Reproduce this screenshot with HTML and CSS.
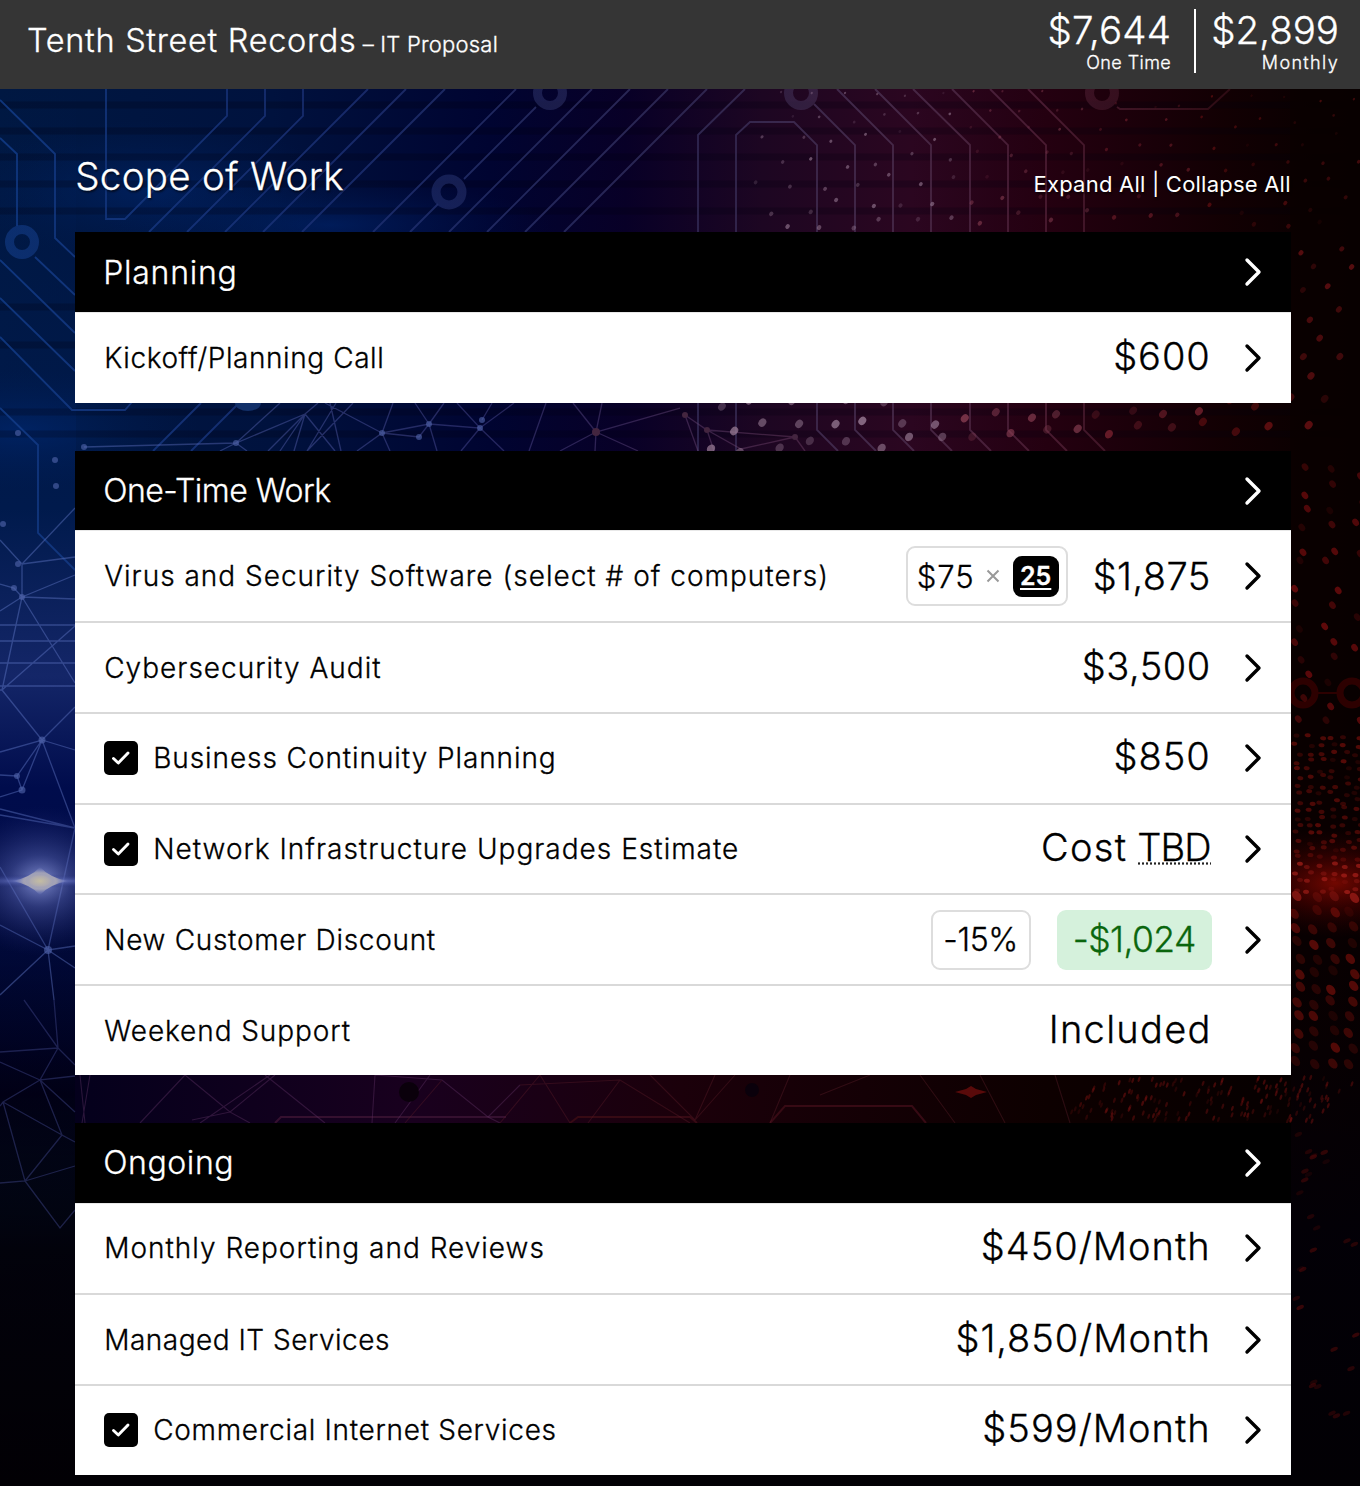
FILE: index.html
```html
<!DOCTYPE html>
<html lang="en">
<head>
<meta charset="utf-8">
<title>Tenth Street Records – IT Proposal</title>
<link rel="stylesheet" href="styles.css">
</head>
<body>
<svg class="icon-defs" aria-hidden="true">
  <symbol id="chevron" viewBox="0 0 18 30"><path d="M3 3 15 15 3 27" fill="none" stroke="currentColor" stroke-width="3.4" stroke-linecap="round" stroke-linejoin="round"/></symbol>
  <symbol id="check" viewBox="0 0 34 34"><path d="M9.5 17.5 14.3 22 24 12" fill="none" stroke="currentColor" stroke-width="2.9" stroke-linecap="round" stroke-linejoin="round"/></symbol>
</svg>

<svg class="backdrop" viewBox="0 0 1360 1486" aria-hidden="true">
  <defs>
    <linearGradient id="base" x1="0" x2="1" y1="0" y2="0">
      <stop offset="0" stop-color="#001842"/><stop offset=".2" stop-color="#00123e"/><stop offset=".36" stop-color="#000431"/><stop offset=".46" stop-color="#080027"/>
      <stop offset=".56" stop-color="#1d0622"/><stop offset=".67" stop-color="#2b0620"/><stop offset=".77" stop-color="#240010"/><stop offset=".9" stop-color="#120003"/><stop offset="1" stop-color="#060000"/>
    </linearGradient>
    <linearGradient id="edge" x1="0" x2="0" y1="0" y2="1">
      <stop offset="0" stop-color="#00194a" stop-opacity="0"/><stop offset=".3" stop-color="#001a4c"/><stop offset=".42" stop-color="#142668"/><stop offset=".5" stop-color="#000c4c"/><stop offset=".62" stop-color="#000a40"/><stop offset=".72" stop-color="#000020"/><stop offset=".82" stop-color="#02000e" stop-opacity="0"/>
    </linearGradient>
    <linearGradient id="dusk" x1="0" x2="0" y1="0" y2="1">
      <stop offset=".55" stop-color="#020007" stop-opacity="0"/><stop offset=".7" stop-color="#020007" stop-opacity=".25"/><stop offset=".84" stop-color="#020007" stop-opacity=".93"/><stop offset="1" stop-color="#020004"/>
    </linearGradient>
    <linearGradient id="lower" x1="0" x2="1" y1="0" y2="0">
      <stop offset="0" stop-color="#04001c"/><stop offset=".28" stop-color="#19001e"/><stop offset=".5" stop-color="#1b000a"/><stop offset=".8" stop-color="#0d0000"/><stop offset="1" stop-color="#060000"/>
    </linearGradient>
    <linearGradient id="ink" gradientUnits="userSpaceOnUse" x1="0" x2="1360" y1="0" y2="0">
      <stop offset="0" stop-color="#123c88"/><stop offset=".25" stop-color="#1b2f72"/><stop offset=".5" stop-color="#322c58"/><stop offset=".65" stop-color="#4a2f50"/><stop offset=".77" stop-color="#501f36"/><stop offset=".92" stop-color="#300b12"/><stop offset="1" stop-color="#1c0204"/>
    </linearGradient>
    <linearGradient id="mesh" gradientUnits="userSpaceOnUse" x1="0" x2="1360" y1="0" y2="0">
      <stop offset="0" stop-color="#6079c8"/><stop offset=".35" stop-color="#4f4f9b"/><stop offset=".55" stop-color="#71456f"/><stop offset="1" stop-color="#521318"/>
    </linearGradient>
    <radialGradient id="halo"><stop offset="0" stop-color="#98a4e8" stop-opacity=".85"/><stop offset=".35" stop-color="#5764b4" stop-opacity=".5"/><stop offset="1" stop-color="#1a2470" stop-opacity="0"/></radialGradient>
    <radialGradient id="core"><stop offset="0" stop-color="#c4bda2"/><stop offset=".55" stop-color="#aeaab0"/><stop offset="1" stop-color="#7683cc" stop-opacity="0"/></radialGradient>
    <radialGradient id="ember"><stop offset="0" stop-color="#850900" stop-opacity=".85"/><stop offset=".4" stop-color="#570200" stop-opacity=".6"/><stop offset="1" stop-color="#2a0000" stop-opacity="0"/></radialGradient>
    <radialGradient id="glow"><stop offset="0" stop-color="#00318a" stop-opacity=".38"/><stop offset="1" stop-color="#002060" stop-opacity="0"/></radialGradient>
  </defs>
  <rect width="1360" height="1486" fill="url(#base)"/>
  <rect y="89" width="76" height="1397" fill="url(#edge)"/>
  <g fill="url(#glow)"><ellipse cx="150" cy="190" rx="190" ry="70"/><ellipse cx="330" cy="225" rx="220" ry="45"/><ellipse cx="20" cy="430" rx="180" ry="60"/></g>
  <g fill="none" stroke="#00020d" stroke-width="7" opacity=".22"><path d="M0 105H1360M0 131H1360M0 157H1360M0 184H1360M0 211H1360M0 307H75M0 345H75M0 412H1360M0 434H1360"/></g>
  <rect x="1290" y="89" width="70" height="1397" fill="#090000" opacity=".75"/>
  <rect width="1360" height="1486" fill="url(#dusk)"/>
  <rect x="75" y="1070" width="1216" height="60" fill="url(#lower)"/>

  <g fill="none" stroke="url(#ink)" stroke-width="1.8" opacity=".85">
    <path d="M106 89V219H125L227 116V89M265 89V116L149 232M303 89V116L187 232M368 89 225 232M406 89 263 232M445 89 302 232M516 89 373 232M536 107 464 179M438 204 410 232M592 89 449 232M630 89 487 232M668 89 525 232M707 89 564 232"/>
    <path d="M0 100 55 154V238L75 257M0 138 17 154V226M35 257 75 295M0 260 75 333M0 298 75 371M0 337 72 410H125L132 402M0 408 38 445V533L75 570"/>
    <path d="M745 89 698 135V451M736 232V135L750 122H794L817 145V430L838 451M814 104 855 145V430L876 451M837 89 893 145V430L914 451M875 89 931 145V430L952 451M913 89 970 145V430L991 451M952 89 1008 145V430L1029 451M990 89 1046 145V430L1067 451M1028 89 1084 145V430L1105 451M1117 107 1120 109H1208L1230 89M736 403V451M201 403 153 451M239 403 191 451"/>
  </g>
  <g fill="none" stroke="#35102f" stroke-width="2"><path d="M275 1123 281 1117H506"/><path d="M570 1123 578 1117H690L697 1123M770 1123 785 1106H912L926 1123" stroke="#370a14"/></g>
  <g fill="none" stroke="url(#ink)" stroke-width="9" opacity=".62"><circle cx="22" cy="242" r="12.5"/><circle cx="449" cy="192" r="13"/><circle cx="550" cy="93" r="12.5"/><circle cx="801" cy="93" r="12.5"/><circle cx="1102" cy="93" r="12.5"/></g>
  <g fill="none" stroke="#370000" stroke-width="7" opacity=".8"><circle cx="1303" cy="693" r="12"/><circle cx="1352" cy="693" r="12"/><path d="M1317 693H1338" stroke-width="2"/></g>
  <ellipse cx="248" cy="403" rx="13" ry="8" fill="#123069"/>

  <g fill="none" stroke="url(#mesh)" stroke-width="1.3" opacity=".45">
    <path d="M84 447 236 443 305 414 318 403M236 443 280 403M236 443 220 451M236 443 247 451M305 414 268 451M305 414 335 451M305 414 280 451M305 414 294 451M325 403 382 433 357 451M382 433 419 437 429 424 382 433M382 433 393 403M382 433 390 451M429 424 415 403M429 424 444 403M429 424 437 451M429 424 480 428 461 451M480 428 504 451M457 403 480 428 514 403M482 420 492 403M596 432 573 403M596 432 602 403M596 432 560 451M596 432 638 451M596 432 595 451M596 432 680 408M546 403 529 451M685 415 698 451M685 415 707 430 795 437 741 449 707 430M795 437 805 451M707 430 714 451M336 403 307 451M353 403 307 451M330 403 341 451"/>
    <path d="M22 564 0 540M22 564 75 557M22 564 22 597 0 611M22 597 14 588 0 584M22 597 75 575M22 597 75 683M22 597 2 690 0 690M22 597 75 599M22 564 75 508M0 625 75 625M0 641 75 641M0 686H75M0 663H75M2 690 42 740 75 707M2 690 75 626M42 740 0 752M42 740 75 750M42 740 75 828M42 740 17 776 0 775M42 740 22 790 0 797M22 790 17 776M75 828 0 809M75 828 0 815M75 828 48 950M48 950 0 867M48 950 0 925M48 950 75 946M48 950 0 995M48 950 54 1000M48 950 75 968"/>
  </g>
  <g fill="none" stroke="#39407f" stroke-width="1.3" opacity=".5">
    <path d="M58 1048 0 1052M58 1048 24 1000M58 1048 75 1065M58 1048 40 1080 75 1076M58 1048 54 1000M40 1080 0 1062M40 1080 3 1102 0 1106M40 1080 62 1135 75 1142M40 1080 75 1112M3 1102 25 1181 0 1183M3 1102 62 1135M25 1181 60 1228 75 1210M25 1181 75 1166M25 1181 62 1135"/>
  </g>
  <g fill="none" stroke="#633468" stroke-width="1.1" opacity=".4">
    <path d="M80 1075 85 1123M90 1075 82 1123M185 1075 230 1112 275 1075M192 1120 230 1112 250 1123M185 1075 140 1123M270 1075 200 1123M265 1075 325 1123M375 1075 372 1123M430 1075 395 1123M375 1075 442 1080 488 1117 500 1123M488 1117 520 1085"/>
    <path d="M520 1085 620 1080 690 1123M442 1080 405 1123M540 1075 500 1123M540 1075 570 1123M620 1080 588 1123M650 1075 695 1120 735 1075M695 1120 715 1075M770 1123 790 1075M820 1095 870 1075M920 1075 955 1123M980 1075 1005 1123M1055 1075 1070 1123" stroke="#5c1d2a"/>
  </g>
  <g fill="#5367ae" opacity=".6"><circle cx="18" cy="433" r="3"/><circle cx="55" cy="460" r="3"/><circle cx="56" cy="486" r="3"/><circle cx="84" cy="447" r="3"/><circle cx="3" cy="524" r="3"/><circle cx="18" cy="564" r="3"/><circle cx="14" cy="588" r="3"/><circle cx="22" cy="597" r="3"/><circle cx="42" cy="740" r="3.5"/><circle cx="17" cy="776" r="3"/><circle cx="22" cy="790" r="3.5"/><circle cx="48" cy="950" r="4"/><circle cx="236" cy="443" r="3"/><circle cx="382" cy="433" r="3"/><circle cx="419" cy="437" r="3"/><circle cx="429" cy="424" r="3"/><circle cx="480" cy="428" r="3"/><circle cx="482" cy="420" r="3"/></g>
  <g fill="#43253f"><circle cx="596" cy="432" r="4"/><circle cx="685" cy="415" r="3"/><circle cx="707" cy="430" r="3"/><circle cx="795" cy="437" r="3"/></g>
  <g fill="#0a000b"><circle cx="409" cy="1092" r="10"/><circle cx="752" cy="1090" r="7"/></g>
  <path d="M955 1092 966 1089 971 1086 976 1089 987 1092 976 1095 971 1098 966 1095Z" fill="#6c0d0d" opacity=".8"/>

  <ellipse cx="40" cy="881" rx="90" ry="75" fill="url(#halo)"/>
  <ellipse cx="40" cy="881" rx="110" ry="7" fill="url(#halo)"/>
  <path d="M12 881Q30 878 40 867Q50 878 68 881Q50 884 40 895Q30 884 12 881Z" fill="url(#core)"/>
  <ellipse cx="40" cy="881" rx="17" ry="9" fill="url(#core)"/>
  <ellipse cx="1335" cy="883" rx="110" ry="55" fill="url(#ember)"/>
  <g id="dots"></g>
</svg>

<header class="topbar">
  <h1 class="client"><span class="client-name">Tenth Street Records</span> <small>– IT Proposal</small></h1>
  <dl class="totals">
    <div class="total total-once"><dd>$7,644</dd><dt class="track-4">One Time</dt></div>
    <div class="total total-monthly"><dd>$2,899</dd><dt class="track-13">Monthly</dt></div>
  </dl>
</header>

<main class="scope">
  <div class="scope-head">
    <h2>Scope of Work</h2>
    <nav class="toggles"><a>Expand All</a> | <a>Collapse All</a></nav>
  </div>

  <section class="panel">
    <h3 class="track-8">Planning<svg class="chevron"><use href="#chevron"/></svg></h3>
    <div class="row"><span class="label track-6">Kickoff/Planning Call</span><span class="price track-9">$600</span><svg class="chevron"><use href="#chevron"/></svg></div>
  </section>

  <section class="panel">
    <h3 class="track-n5">One-Time Work<svg class="chevron"><use href="#chevron"/></svg></h3>
    <div class="row"><span class="label track-10">Virus and Security Software (select # of computers)</span><span class="box quantity"><span class="unit">$75</span><svg class="times" viewBox="0 0 14 14"><path d="M1.5 1.5 12.5 12.5M12.5 1.5 1.5 12.5" stroke="#999" stroke-width="2"/></svg><span class="count">25</span></span><span class="price price-total track-4">$1,875</span><svg class="chevron"><use href="#chevron"/></svg></div>
    <div class="row"><span class="label track-10">Cybersecurity Audit</span><span class="price track-5">$3,500</span><svg class="chevron"><use href="#chevron"/></svg></div>
    <div class="row"><svg class="checkbox"><use href="#check"/></svg><span class="label track-9">Business Continuity Planning</span><span class="price track-10">$850</span><svg class="chevron"><use href="#chevron"/></svg></div>
    <div class="row"><svg class="checkbox"><use href="#check"/></svg><span class="label track-10">Network Infrastructure Upgrades Estimate</span><span class="price"><span class="track-13">Cost</span> <abbr>TBD</abbr></span><svg class="chevron"><use href="#chevron"/></svg></div>
    <div class="row"><span class="label track-7">New Customer Discount</span><span class="box percent">-15%</span><span class="box saving">-$1,024</span><svg class="chevron"><use href="#chevron"/></svg></div>
    <div class="row"><span class="label track-9">Weekend Support</span><span class="price price-last track-15">Included</span></div>
  </section>

  <section class="panel">
    <h3 class="track-6">Ongoing<svg class="chevron"><use href="#chevron"/></svg></h3>
    <div class="row"><span class="label track-10">Monthly Reporting and Reviews</span><span class="price track-10">$450/Month</span><svg class="chevron"><use href="#chevron"/></svg></div>
    <div class="row"><span class="label track-5">Managed IT Services</span><span class="price track-9">$1,850/Month</span><svg class="chevron"><use href="#chevron"/></svg></div>
    <div class="row"><svg class="checkbox"><use href="#check"/></svg><span class="label track-7">Commercial Internet Services</span><span class="price track-10">$599/Month</span><svg class="chevron"><use href="#chevron"/></svg></div>
  </section>
</main>
<script src="backdrop.js"></script>
</body>
</html>
```

FILE: styles.css
```css
* { box-sizing: border-box; }
html, body { height: 1486px; overflow: hidden; }
body {
  position: relative;
  margin: 0;
  background: #020007;
  color: #000;
  font-family: Inter, "Liberation Sans", sans-serif;
  font-weight: 300;
  -webkit-text-stroke: .3px currentColor;
}
h1, h2, h3, dl, dd, dt { margin: 0; font-weight: 300; }

.icon-defs { position: absolute; width: 0; height: 0; }
.backdrop { position: absolute; inset: 0; width: 1360px; height: 1486px; z-index: -1; }

/* Top bar */
.topbar {
  display: flex;
  justify-content: space-between;
  height: 89px;
  padding: 9px 21px 0 27px;
  background: #353535;
  color: #fff;
}
.client { padding-top: 12px; font-size: 32.5px; line-height: 40px; }
.client-name { letter-spacing: .68px; }
.client small { margin-left: -3px; font-size: 22px; letter-spacing: .23px; }
.totals { display: flex; height: 64px; text-align: right; }
.total dd { height: 41px; font-size: 38.5px; line-height: 42px; }
.total dt { font-size: 18px; line-height: 25px; }
.total-once { padding-right: 23px; border-right: 2px solid #fff; letter-spacing: .2px; }
.total-monthly { padding-left: 15px; }

/* Scope of work */
.scope { width: 1215.5px; margin: 0 0 0 75.2px; }
.scope-head {
  display: flex;
  justify-content: space-between;
  height: 143.3px;
  padding-top: 63px;
  color: #fff;
  text-shadow: 1px 2px 2px rgba(0, 0, 0, .6);
}
.scope-head h2 { font-size: 38.5px; line-height: 48px; letter-spacing: .32px; }
.toggles { padding-top: 18px; font-size: 22px; font-weight: 400; line-height: 28px; letter-spacing: .22px; -webkit-text-stroke: 0; }

.panel { margin-bottom: 47.8px; background: #fff; }
.panel h3 {
  display: flex;
  align-items: center;
  justify-content: space-between;
  height: 79.8px;
  padding: 0 29px 0 28px;
  background: #000;
  color: #fff;
  font-size: 32px;
}
.row {
  display: flex;
  align-items: center;
  height: 90.75px;
  padding: 0 29px;
  border-top: 2px solid #d9d9d9;
}
.row:nth-child(2) { border-top-color: #e8e8e8; border-top-width: 1px; }
.label { flex: 1; font-size: 28px; line-height: 36px; white-space: nowrap; }
.price { margin-top: -4px; font-size: 38px; line-height: 46px; white-space: nowrap; }
.price-total { margin-top: -1px; }
.price-last { margin-right: 50px; }
.price abbr { margin-left: -1px; letter-spacing: -.9px; text-decoration: none; background: radial-gradient(circle, #222 1px, transparent 1.3px) 0 calc(100% - 5px) / 4px 3px repeat-x; }
.chevron { flex: none; width: 18px; height: 30px; }
.row .chevron { margin-left: 33px; }
.checkbox { flex: none; width: 34px; height: 34px; margin-right: 15px; border-radius: 5px; background: #000; color: #fff; }

.box {
  display: flex;
  align-items: center;
  height: 60px;
  border: 2px solid #ddd;
  border-radius: 9px;
  white-space: nowrap;
}
.quantity { width: 162px; margin-right: 25px; padding-left: 9px; font-size: 31px; }
.unit { width: 69px; letter-spacing: 1px; }
.times { width: 14px; height: 14px; margin-right: 13px; }
.count {
  width: 46px;
  height: 41px;
  border-radius: 9px;
  background: #000;
  color: #fff;
  font-size: 25px;
  font-weight: 600;
  line-height: 41px;
  text-align: center;
  text-decoration: underline;
  text-decoration-thickness: 2px;
  text-underline-offset: 3px;
}
.percent { justify-content: center; width: 100px; margin-right: 26px; font-size: 32px; letter-spacing: -.35px; }
.saving { justify-content: center; width: 155px; border: 0; background: #d5f1dc; color: #0a660d; font-size: 35.5px; letter-spacing: -.6px; }
.row .saving + .chevron { margin-left: 32px; }

/* Letter tracking, in tenths of a pixel */
.track-n5 { letter-spacing: -.5px; }
.track-4 { letter-spacing: .42px; }
.track-5 { letter-spacing: .5px; }
.track-6 { letter-spacing: .58px; }
.track-7 { letter-spacing: .7px; }
.track-8 { letter-spacing: .75px; }
.track-9 { letter-spacing: .92px; }
.track-10 { letter-spacing: 1px; }
.track-13 { letter-spacing: 1.35px; }
.track-15 { letter-spacing: 1.3px; }
```

FILE: backdrop.js
```js
// Scatters the halftone particles on the right side of the backdrop.
const group = document.getElementById('dots');
let seed = 7;
const rand = () => (seed = (seed * 16807) % 2147483647) / 2147483647;

function dot(x, y, rx, ry, angle, fill, opacity) {
  const e = document.createElementNS('http://www.w3.org/2000/svg', 'ellipse');
  e.setAttribute('cx', x);
  e.setAttribute('cy', y);
  e.setAttribute('rx', rx);
  e.setAttribute('ry', ry);
  e.setAttribute('transform', `rotate(${angle} ${x} ${y})`);
  e.setAttribute('fill', fill);
  e.setAttribute('opacity', opacity);
  group.append(e);
}

// Upper field: small pale specks that grow and redden to the right and down.
for (let row = 0; row < 17; row++) {
  for (let col = 0; col < 19; col++) {
    const y = 92 + row * 22 + rand() * 12 - col * 1.5;
    const x = 770 + col * 33 + (row % 2) * 16 + rand() * 12 - row * 4;
    if (y < 89 || (y > 228 && y < 400 && x < 1285)) continue;
    const r = 1 + (y - 89) / 130;
    const fill = x < 960 ? '#9c7f98' : x < 1090 ? '#8c4054' : x < 1200 ? '#7c2230' : '#711114';
    dot(x, y, r, r * 1.25, 40, fill, (y < 230 ? .12 : .3) + rand() * .5);
  }
}

// Specks beside the panels.
for (let y = 465; y < 730; y += 19) {
  for (let x = 1294; x < 1360; x += 30) dot(x + rand() * 16, y + rand() * 14, 3, 4, -35, '#7d0c0e', .15 + rand() * .6);
}

// Dense wave around the ember glow.
for (let y = 735; y < 1062; y += y < 890 ? 8 : 15) {
  const r = y < 890 ? 2.4 : 4.6;
  for (let x = 1294; x < 1362; x += y < 890 ? 12 : 18) {
    const hot = Math.abs(y - 883) < 22;
    dot(x + rand() * 7, y + rand() * 5, r * 1.25, r * .85, y < 890 ? 8 : 50, hot ? '#a51f19' : '#700d09', .2 + rand() * .55);
  }
}

// Fading tail under the wave.
for (let i = 0; i < 160; i++) {
  const y = 1077 + rand() * 45;
  const x = 1105 - (y - 1077) + rand() * 255;
  dot(x, y, 1.2, 2.8, 20, '#7a1110', .15 + rand() * .4);
}
for (let i = 0; i < 28; i++) dot(1295 + rand() * 64, 1130 + rand() * 290, 4, 2, -25, '#6d0b0a', .1 + rand() * .4);
```
